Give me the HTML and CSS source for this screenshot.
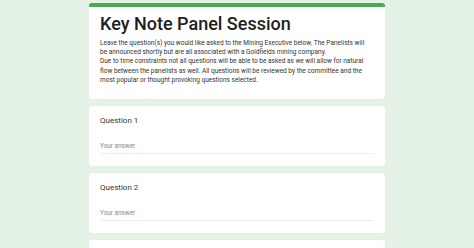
FILE: index.html
```html
<!DOCTYPE html>
<html lang="en">
<head>
  <meta charset="UTF-8">
  <meta name="viewport" content="width=device-width, initial-scale=1.0">
  <title>Key Note Panel Session</title>
  <link rel="stylesheet" href="styles.css">
</head>
<body>
  <div class="form">
    <!-- Cabecera -->
    <div class="card header-card">
      <h1>Key Note Panel Session</h1>
      <p class="description">Leave the question(s) you would like asked to the Mining Executive below. The Panelists will be announced shortly but are all associated with a Goldfields mining company.<br>Due to time constraints not all questions will be able to be asked as we will allow for natural flow between the panelists as well. All questions will be reviewed by the committee and the most popular or thought provoking questions selected.</p>
    </div>

    <!-- Preguntas -->
    <div class="card question">
      <div class="question-title">Question 1</div>
      <div class="answer">Your answer</div>
    </div>

    <div class="card question">
      <div class="question-title">Question 2</div>
      <div class="answer">Your answer</div>
    </div>

    <!-- Siguiente tarjeta (fuera de la vista) -->
    <div class="card question"></div>
  </div>
</body>
</html>
```

FILE: styles.css
```css
/* General */
body {
  font-family: Roboto, "Liberation Sans", sans-serif;
  margin: 0;
  padding: 0;
  background-color: #e5f2e6;
  color: #202124;
}

.form {
  width: 296px;
  margin: 0 auto;
  padding-top: 3px;
  display: flex;
  flex-direction: column;
  gap: 7px;
}

.card {
  background-color: #ffffff;
  border-radius: 3px;
  box-shadow: 0 0 1px rgba(0, 0, 0, 0.08);
}

/* Cabecera */
.header-card {
  border-top: 4px solid #4caa50;
  padding: 6px 11px 14px;
}

.header-card h1 {
  font-size: 18px;
  font-weight: 500;
  margin: 0 0 5px;
}

.description {
  font-size: 6.5px;
  line-height: 9.2px;
  margin: 0;
  padding-right: 4px;
  color: #333333;
}

/* Preguntas */
.question {
  height: 60px;
  padding: 10px 11px 0;
  box-sizing: border-box;
}

.question-title {
  font-size: 8px;
  color: #333333;
}

.answer {
  margin-top: 17px;
  font-size: 6.4px;
  color: #8a8a8a;
  padding-bottom: 3px;
  border-bottom: 1px solid #ededed;
}
```
